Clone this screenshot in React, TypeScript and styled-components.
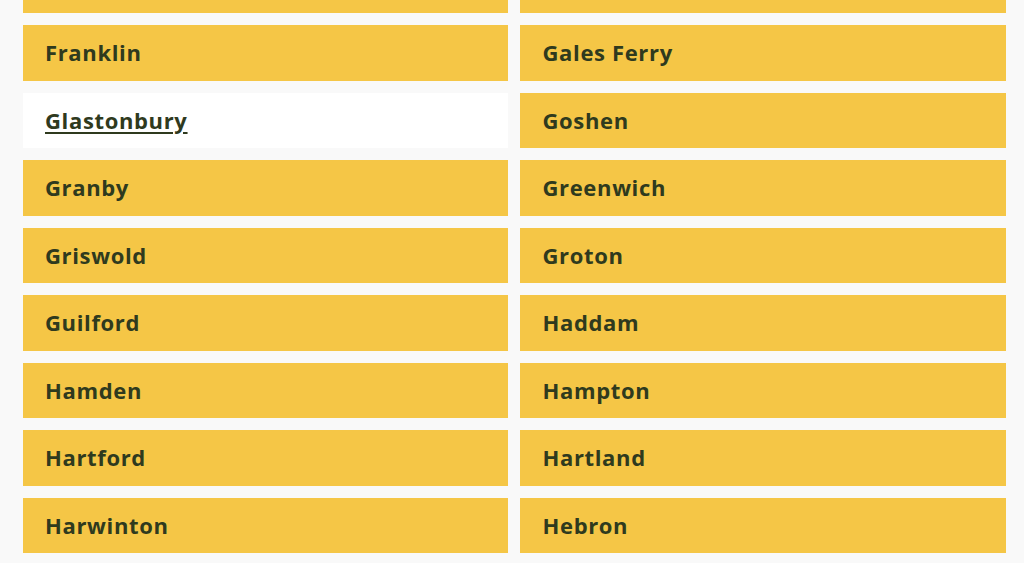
import React from "react";
import styled, { createGlobalStyle } from "styled-components";

const GlobalStyle = createGlobalStyle`
  html, body {
    margin: 0;
    padding: 0;
    background: #f9f9f9;
    overflow: hidden;
  }
`;

const Page = styled.div`
  width: 1024px;
  height: 563px;
  overflow: hidden;
  background: #f9f9f9;
  padding: 0 18.5px 0 22.5px;
  box-sizing: border-box;
`;

const Grid = styled.ul`
  list-style: none;
  margin: -42.5px 0 0 0;
  padding: 0;
  display: grid;
  grid-template-columns: 1fr 1fr;
  column-gap: 12px;
  row-gap: 12px;
`;

const Cell = styled.li<{ $active?: boolean }>`
  height: 55.5px;
  display: flex;
  align-items: center;
  padding: 0 22.5px 1.5px;
  box-sizing: border-box;
  background: ${(p) => (p.$active ? "#ffffff" : "#f5c646")};
`;

const TownLink = styled.a<{ $active?: boolean }>`
  font-family: "Open Sans", "Liberation Sans", sans-serif;
  font-weight: 700;
  font-size: 22px;
  color: #2f3a1e;
  text-decoration: ${(p) => (p.$active ? "underline" : "none")};
  text-decoration-thickness: 2px;
  text-underline-offset: 3px;
  letter-spacing: 0.65px;
`;

const towns = [
  "",
  "",
  "Franklin",
  "Gales Ferry",
  "Glastonbury",
  "Goshen",
  "Granby",
  "Greenwich",
  "Griswold",
  "Groton",
  "Guilford",
  "Haddam",
  "Hamden",
  "Hampton",
  "Hartford",
  "Hartland",
  "Harwinton",
  "Hebron",
];

export default function App() {
  return (
    <Page>
      <GlobalStyle />
      <Grid>
        {towns.map((t, i) => {
          const active = t === "Glastonbury";
          return (
            <Cell key={i} $active={active}>
              {t && (
                <TownLink href="#" $active={active}>
                  {t}
                </TownLink>
              )}
            </Cell>
          );
        })}
      </Grid>
    </Page>
  );
}
